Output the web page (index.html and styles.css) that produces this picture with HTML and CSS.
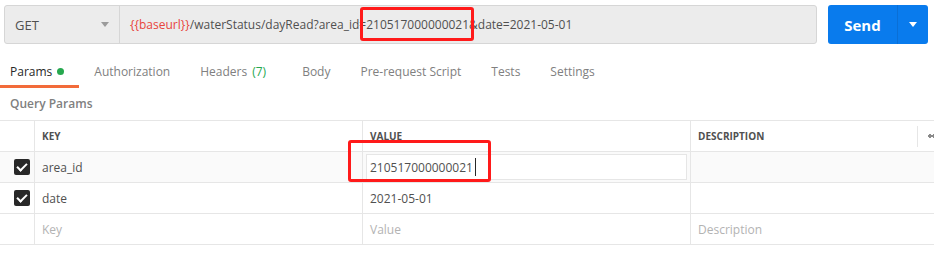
FILE: index.html
```html
<!DOCTYPE html>
<html lang="en">
<head>
    <meta charset="UTF-8">
    <title>Request</title>
    <link rel="stylesheet" href="styles.css">
</head>
<body>
<div class="request-bar">
    <div class="url-group">
        <div class="method">
            <span>GET</span>
            <span class="caret-gray"></span>
        </div>
        <div class="url"><span class="var">{{baseurl}}</span>/waterStatus/dayRead?area_id=210517000000021&amp;date=2021-05-01</div>
    </div>
    <div class="send">
        <div class="send-label">Send</div>
        <div class="send-more"><span class="caret-white"></span></div>
    </div>
    <div class="mark mark-url"></div>
</div>

<div class="tabs">
    <div class="tab active">Params <span class="dot"></span></div>
    <div class="tab">Authorization</div>
    <div class="tab tab-headers">Headers <span class="count">(7)</span></div>
    <div class="tab">Body</div>
    <div class="tab">Pre-request Script</div>
    <div class="tab">Tests</div>
    <div class="tab">Settings</div>
</div>

<div class="section-title">Query Params</div>

<div class="params">
    <div class="row head">
        <div class="cell check"></div>
        <div class="cell">KEY</div>
        <div class="cell">VALUE</div>
        <div class="cell desc-head">
            <span>DESCRIPTION</span>
            <span class="head-actions"><span class="bar"></span><span class="dots"></span></span>
        </div>
    </div>
    <div class="row hover">
        <div class="cell check"><span class="checkbox"></span></div>
        <div class="cell">area_id</div>
        <div class="cell edit-cell">
            <div class="edit-box">210517000000021<span class="cursor"></span></div>
        </div>
        <div class="cell"></div>
    </div>
    <div class="row">
        <div class="cell check"><span class="checkbox"></span></div>
        <div class="cell">date</div>
        <div class="cell">2021-05-01</div>
        <div class="cell"></div>
    </div>
    <div class="row placeholder">
        <div class="cell check"></div>
        <div class="cell">Key</div>
        <div class="cell">Value</div>
        <div class="cell">Description</div>
    </div>
    <div class="mark mark-value"></div>
</div>
</body>
</html>
```

FILE: styles.css
```css
body {
    margin: 0;
    background: #fff;
    font-family: "Open Sans", "Liberation Sans", sans-serif;
    color: #505050;
    font-size: 12px;
}
.request-bar {
    position: relative;
    display: flex;
    gap: 11px;
    padding: 5px 0 0 4px;
}
.url-group {
    display: flex;
    width: 813px;
    height: 39px;
    box-sizing: border-box;
    background: #ececec;
    border: 1px solid #d6d6d6;
    border-radius: 3px;
}
.method {
    width: 115px;
    box-sizing: border-box;
    display: flex;
    align-items: center;
    justify-content: space-between;
    padding: 0 10px 0 10px;
    border-right: 1px solid #d6d6d6;
    font-size: 13px;
    color: #505050;
}
.caret-gray {
    width: 0;
    height: 0;
    border-left: 4px solid transparent;
    border-right: 4px solid transparent;
    border-top: 5px solid #9b9b9b;
}
.url {
    display: flex;
    align-items: center;
    padding-left: 10px;
    font-size: 12px;
    color: #505050;
}
.var {
    color: #e8453c;
}
.send {
    display: flex;
    width: 100px;
    height: 39px;
    background: #097bed;
    border-radius: 3px;
    color: #fff;
}
.send-label {
    width: 69px;
    display: flex;
    align-items: center;
    justify-content: center;
    font-weight: 700;
    font-size: 15px;
    border-right: 1px solid #0a6fd6;
}
.send-more {
    flex: 1;
    display: flex;
    align-items: center;
    justify-content: center;
}
.caret-white {
    width: 0;
    height: 0;
    border-left: 4px solid transparent;
    border-right: 4px solid transparent;
    border-top: 5px solid #fff;
}
.mark {
    position: absolute;
    border: 3px solid #ff1a1a;
    border-radius: 3px;
    box-sizing: border-box;
}
.mark-url {
    left: 360px;
    top: 7px;
    width: 114px;
    height: 34px;
}
.tabs {
    display: flex;
    margin-top: 16px;
    height: 28px;
}
.tab {
    display: flex;
    align-items: center;
    gap: 5px;
    padding: 0 15px 3px 15px;
    color: #808080;
    font-size: 12px;
    border-bottom: 3px solid transparent;
    box-sizing: border-box;
}
.tab:first-child {
    padding-left: 10px;
}
.tab-headers {
    padding-right: 21px;
}
.tab.active {
    color: #282828;
    border-bottom-color: #f26b3a;
}
.dot {
    width: 7px;
    height: 7px;
    border-radius: 50%;
    background: #26a84f;
}
.count {
    color: #26a84f;
}
.section-title {
    padding: 7px 10px 0;
    height: 32px;
    box-sizing: border-box;
    color: #808080;
    font-weight: 600;
    font-size: 12px;
}
.params {
    position: relative;
    border-top: 1px solid #e6e6e6;
}
.row {
    display: grid;
    grid-template-columns: 34px 328px 328px 1fr;
    height: 31px;
    border-bottom: 1px solid #e6e6e6;
    box-sizing: border-box;
}
.row.hover {
    background: #fafafa;
}
.cell {
    display: flex;
    align-items: center;
    padding-left: 7px;
    border-left: 1px solid #e6e6e6;
    font-size: 12px;
    color: #505050;
}
.cell.check {
    border-left: none;
    padding-left: 14px;
}
.head .cell {
    font-size: 10px;
    font-weight: 700;
    color: #505050;
}
.desc-head {
    justify-content: space-between;
}
.head-actions {
    display: flex;
    align-items: center;
    gap: 10px;
    height: 21px;
}
.bar {
    width: 1px;
    height: 21px;
    background: #e6e6e6;
}
.dots {
    width: 10px;
    height: 4px;
    background: radial-gradient(circle at 2px 2px, #8a8a8a 1.8px, transparent 2px) 0 0 / 4px 4px repeat-x;
    margin-right: -4px;
}
.checkbox {
    position: relative;
    width: 16px;
    height: 16px;
    border-radius: 2px;
    background: #282828;
}
.checkbox::after {
    content: "";
    position: absolute;
    left: 5px;
    top: 2px;
    width: 4px;
    height: 8px;
    border: solid #fff;
    border-width: 0 2px 2px 0;
    transform: rotate(45deg);
}
.edit-cell {
    padding: 0 3px 0 3px;
}
.edit-box {
    flex: 1;
    height: 26px;
    box-sizing: border-box;
    border: 1px solid #e6e6e6;
    background: #fff;
    display: flex;
    align-items: center;
    padding-left: 3px;
}
.cursor {
    width: 1px;
    height: 18px;
    background: #282828;
    margin-left: 2px;
}
.placeholder .cell {
    color: #b3b3b3;
}
.mark-value {
    left: 348px;
    top: 19px;
    width: 143px;
    height: 42px;
}
```
